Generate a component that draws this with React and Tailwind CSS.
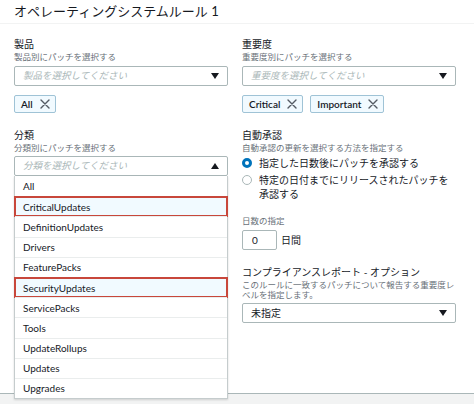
import React from "react";

const FONT = "font-['Lato','Noto_Sans_CJK_JP',sans-serif]";

function Caret({ up = false }) {
  return (
    <svg width="8" height="6" viewBox="0 0 8 6" className="shrink-0">
      {up ? <path d="M0 6 L4 0 L8 6 Z" fill="#16191f" /> : <path d="M0 0 L8 0 L4 6 Z" fill="#16191f" />}
    </svg>
  );
}

function XIcon() {
  return (
    <svg width="10" height="10" viewBox="0 0 10 10" className="shrink-0">
      <path d="M1 1 L9 9 M9 1 L1 9" stroke="#545b64" strokeWidth="1.4" strokeLinecap="round" />
    </svg>
  );
}

function Chip({ label }) {
  return (
    <div className="flex h-[18px] items-center gap-[7px] rounded-[2px] border border-[#9fc3d6] bg-[#f1faff] pl-[6px] pr-[5px]">
      <span className="text-[10px] font-semibold leading-none text-[#16191f]">{label}</span>
      <XIcon />
    </div>
  );
}

function Select({ placeholder, value, up = false }) {
  return (
    <div className="flex h-[20px] items-center justify-between rounded-[2px] border border-[#aab7b8] bg-white pl-[8px] pr-[8px]">
      {placeholder ? (
        <span className="text-[9.5px] italic leading-none text-[#aab7b8]">{placeholder}</span>
      ) : (
        <span className="text-[10px] leading-none text-[#16191f]">{value}</span>
      )}
      <Caret up={up} />
    </div>
  );
}

function Label({ children, className = "" }) {
  return <div className={"h-[12px] text-[10px] font-normal leading-[12px] text-[#16191f] " + className}>{children}</div>;
}

function Sub({ children, className = "" }) {
  return <div className={"text-[8.5px] leading-[10px] text-[#687078] " + className}>{children}</div>;
}

const items = [
  "All",
  "CriticalUpdates",
  "DefinitionUpdates",
  "Drivers",
  "FeaturePacks",
  "SecurityUpdates",
  "ServicePacks",
  "Tools",
  "UpdateRollups",
  "Updates",
  "Upgrades",
];
const marked = ["CriticalUpdates", "SecurityUpdates"];

export default function App() {
  return (
    <div className={"w-[474px] h-[404px] bg-white " + FONT}>
      <div className="h-[394px] border-b border-[#aab7b8]">
        <div className="flex h-[24px] items-center border-b border-[#f2f3f3] pl-[14px]">
          <span className="text-[13px] font-normal leading-none text-[#16191f]">オペレーティングシステムルール 1</span>
        </div>
        <div className="grid grid-cols-[214px_214px] gap-x-[14px] pl-[14px] pt-[14px]">
          {/* left column */}
          <div className="flex flex-col">
            <Label>製品</Label>
            <Sub className="mt-[2px]">製品別にパッチを選択する</Sub>
            <div className="mt-[4px]">
              <Select placeholder="製品を選択してください" />
            </div>
            <div className="mt-[9px] flex gap-[7px]">
              <Chip label="All" />
            </div>
            <Label className="mt-[16px]">分類</Label>
            <Sub className="mt-[2px]">分類別にパッチを選択する</Sub>
            <div className="relative mt-[3px]">
              <Select placeholder="分類を選択してください" up />
              <div className="absolute left-0 right-0 top-full z-10 border-x border-b border-[#c5cccd] bg-white shadow-[0_1px_2px_rgba(0,0,0,0.15)]">
                {items.map((it, i) => {
                  const m = marked.includes(it);
                  return (
                    <div
                      key={it}
                      className={
                        "relative flex h-[20.2px] items-center pl-[8px] text-[10px] leading-none text-[#16191f] " +
                        (i > 0 ? "border-t border-[#eaeded] " : "") +
                        (m ? "bg-[#f1faff]" : "")
                      }
                    >
                      {it}
                      {m && <span className="absolute -left-px -right-px -top-px -bottom-px border-2 border-[#c8473b]" />}
                    </div>
                  );
                })}
              </div>
            </div>
          </div>
          {/* right column */}
          <div className="flex flex-col">
            <Label>重要度</Label>
            <Sub className="mt-[2px]">重要度別にパッチを選択する</Sub>
            <div className="mt-[4px]">
              <Select placeholder="重要度を選択してください" />
            </div>
            <div className="mt-[9px] flex gap-[7px]">
              <Chip label="Critical" />
              <Chip label="Important" />
            </div>
            <Label className="mt-[16px]">自動承認</Label>
            <Sub className="mt-[2px]">自動承認の更新を選択する方法を指定する</Sub>
            <div className="mt-[3px] flex items-start gap-[7px]">
              <span className="mt-[2px] h-[10px] w-[10px] shrink-0 rounded-full border-[3px] border-[#0073bb] bg-white" />
              <span className="text-[10px] leading-[14px] text-[#16191f]">指定した日数後にパッチを承認する</span>
            </div>
            <div className="mt-[3px] flex items-start gap-[7px]">
              <span className="mt-[2px] h-[10px] w-[10px] shrink-0 rounded-full border border-[#aab7b8] bg-white" />
              <span className="text-[10px] leading-[14px] text-[#16191f]">特定の日付までにリリースされたパッチを承認する</span>
            </div>
            <Sub className="mt-[15px]">日数の指定</Sub>
            <div className="mt-[4px] flex items-center gap-[4px]">
              <div className="flex h-[20px] w-[35px] items-center rounded-[2px] border border-[#aab7b8] pl-[9px] text-[10px] leading-none text-[#16191f]">0</div>
              <span className="text-[10px] leading-none text-[#16191f]">日間</span>
            </div>
            <Label className="mt-[16px]">コンプライアンスレポート - オプション</Label>
            <Sub className="mt-[2px]">このルールに一致するパッチについて報告する重要度レベルを指定します。</Sub>
            <div className="mt-[3px]">
              <Select value="未指定" />
            </div>
          </div>
        </div>
      </div>
      <div className="h-[10px] bg-[#f2f3f3]" />
    </div>
  );
}
